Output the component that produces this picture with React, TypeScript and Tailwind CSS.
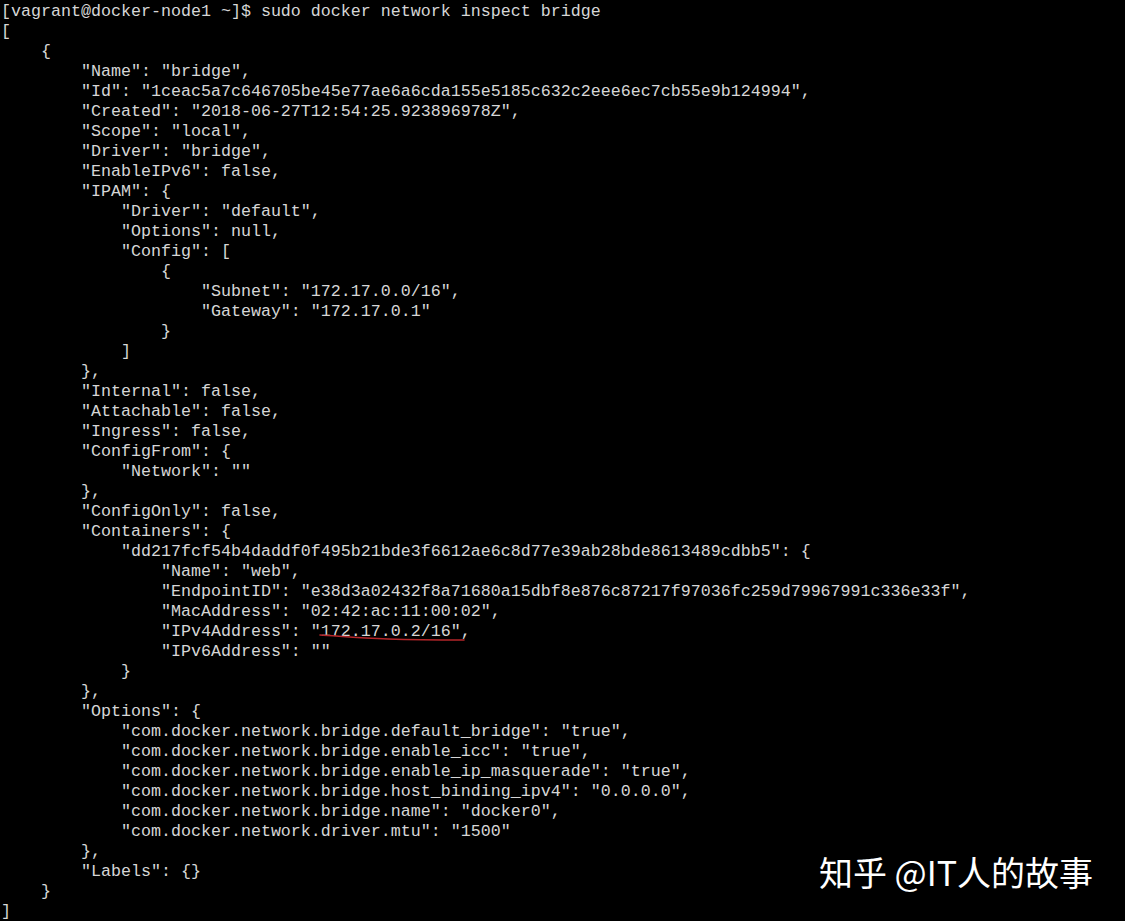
const lines = [
  "[vagrant@docker-node1 ~]$ sudo docker network inspect bridge",
  "[",
  "    {",
  '        "Name": "bridge",',
  '        "Id": "1ceac5a7c646705be45e77ae6a6cda155e5185c632c2eee6ec7cb55e9b124994",',
  '        "Created": "2018-06-27T12:54:25.923896978Z",',
  '        "Scope": "local",',
  '        "Driver": "bridge",',
  '        "EnableIPv6": false,',
  '        "IPAM": {',
  '            "Driver": "default",',
  '            "Options": null,',
  '            "Config": [',
  "                {",
  '                    "Subnet": "172.17.0.0/16",',
  '                    "Gateway": "172.17.0.1"',
  "                }",
  "            ]",
  "        },",
  '        "Internal": false,',
  '        "Attachable": false,',
  '        "Ingress": false,',
  '        "ConfigFrom": {',
  '            "Network": ""',
  "        },",
  '        "ConfigOnly": false,',
  '        "Containers": {',
  '            "dd217fcf54b4daddf0f495b21bde3f6612ae6c8d77e39ab28bde8613489cdbb5": {',
  '                "Name": "web",',
  '                "EndpointID": "e38d3a02432f8a71680a15dbf8e876c87217f97036fc259d79967991c336e33f",',
  '                "MacAddress": "02:42:ac:11:00:02",',
  '                "IPv4Address": "172.17.0.2/16",',
  '                "IPv6Address": ""',
  "            }",
  "        },",
  '        "Options": {',
  '            "com.docker.network.bridge.default_bridge": "true",',
  '            "com.docker.network.bridge.enable_icc": "true",',
  '            "com.docker.network.bridge.enable_ip_masquerade": "true",',
  '            "com.docker.network.bridge.host_binding_ipv4": "0.0.0.0",',
  '            "com.docker.network.bridge.name": "docker0",',
  '            "com.docker.network.driver.mtu": "1500"',
  "        },",
  '        "Labels": {}',
  "    }",
  "]",
];

export default function App() {
  return (
    <div className="relative w-[1125px] h-[921px] overflow-hidden bg-black">
      {/* terminal output */}
      <div className="pt-[2px] pl-[1px] text-[#d6d6d6] font-['Liberation_Mono',monospace] text-[16.67px] leading-[20px]">
        {lines.map((line, i) => (
          <div key={i} className="whitespace-pre h-[20px]">
            {line}
          </div>
        ))}
      </div>

      {/* hand-drawn underline under the IPv4 address */}
      <svg className="absolute left-[318px] top-[632px]" width="150" height="12" viewBox="0 0 150 12">
        <path
          d="M2 3 C 20 4, 40 6, 70 7 C 100 8, 125 8, 146 8"
          fill="none"
          stroke="#b4262a"
          strokeWidth="1.6"
          strokeLinecap="round"
        />
      </svg>

      {/* watermark */}
      <div className="absolute left-[819px] top-[850px] text-white text-[34px] leading-[44px] font-['Noto_Sans_CJK_SC',sans-serif] whitespace-pre">
        知乎 @IT人的故事
      </div>
    </div>
  );
}
